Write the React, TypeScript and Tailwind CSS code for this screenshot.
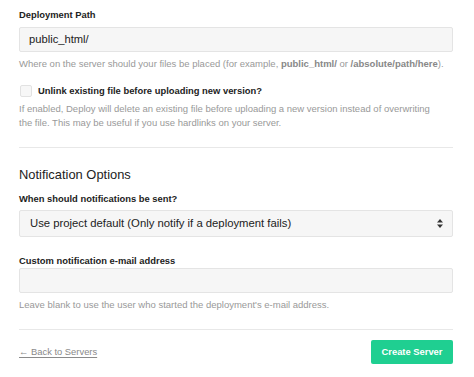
import React from "react";

export default function App() {
  const font = { fontFamily: '"Liberation Sans", Arial, sans-serif' };
  return (
    <div className="w-[474px] h-[377px] bg-white overflow-hidden text-[#222]" style={font}>
      <div className="ml-[19px] w-[434px] pt-[9px]">
        <div className="text-[9.4px] font-bold leading-[12px]">Deployment Path</div>
        <div className="mt-[6px] h-[25px] bg-[#f6f6f6] border border-[#e4e4e4] rounded-[2px] flex items-center pl-[9px] text-[11.2px]">
          public_html/
        </div>
        <div className="mt-[6px] text-[9.5px] leading-[12px] text-[#999]">
          Where on the server should your files be placed (for example, <span className="font-bold text-[#888]">public_html/</span> or <span className="font-bold text-[#888]">/absolute/path/here</span>).
        </div>
        <div className="mt-[15px] flex items-center">
          <div className="w-[12px] h-[12px] ml-[1px] rounded-[2px] bg-[#f7f7f7] border border-[#e2e2e2]" />
          <div className="ml-[6px] text-[9.4px] font-bold leading-[12px]">Unlink existing file before uploading new version?</div>
        </div>
        <div className="mt-[5px] text-[9.5px] leading-[14px] text-[#999] pr-[10px]">
          If enabled, Deploy will delete an existing file before uploading a new version instead of overwriting the file. This may be useful if you use hardlinks on your server.
        </div>
        <div className="mt-[17px] h-px bg-[#e8e8e8]" />
        <div className="mt-[19px] text-[12.9px] leading-[16px]">Notification Options</div>
        <div className="mt-[10px] text-[9.4px] font-bold leading-[12px]">When should notifications be sent?</div>
        <div className="mt-[5px] h-[27px] bg-[#f6f6f6] border border-[#e4e4e4] rounded-[2px] flex items-center justify-between pl-[10px] pr-[9px] text-[11.3px]">
          <span>Use project default (Only notify if a deployment fails)</span>
          <svg width="6" height="9" viewBox="0 0 6 9">
            <path d="M3 0 L6 3.5 L0 3.5 Z" fill="#333" />
            <path d="M3 9 L6 5.5 L0 5.5 Z" fill="#333" />
          </svg>
        </div>
        <div className="mt-[18px] text-[9.4px] font-bold leading-[12px]">Custom notification e-mail address</div>
        <div className="mt-[1px] h-[25px] bg-[#f6f6f6] border border-[#e4e4e4] rounded-[2px]" />
        <div className="mt-[6px] text-[9.5px] leading-[12px] text-[#999]">
          Leave blank to use the user who started the deployment's e-mail address.
        </div>
        <div className="mt-[18px] h-px bg-[#e8e8e8]" />
        <div className="mt-[10px] flex items-center justify-between">
          <a className="text-[9.4px] text-[#8a8a8a] underline underline-offset-[2px]">← Back to Servers</a>
          <button className="w-[82px] h-[24px] rounded-[2px] bg-[#1fcf91] text-white text-[9.4px] font-bold">Create Server</button>
        </div>
      </div>
    </div>
  );
}
